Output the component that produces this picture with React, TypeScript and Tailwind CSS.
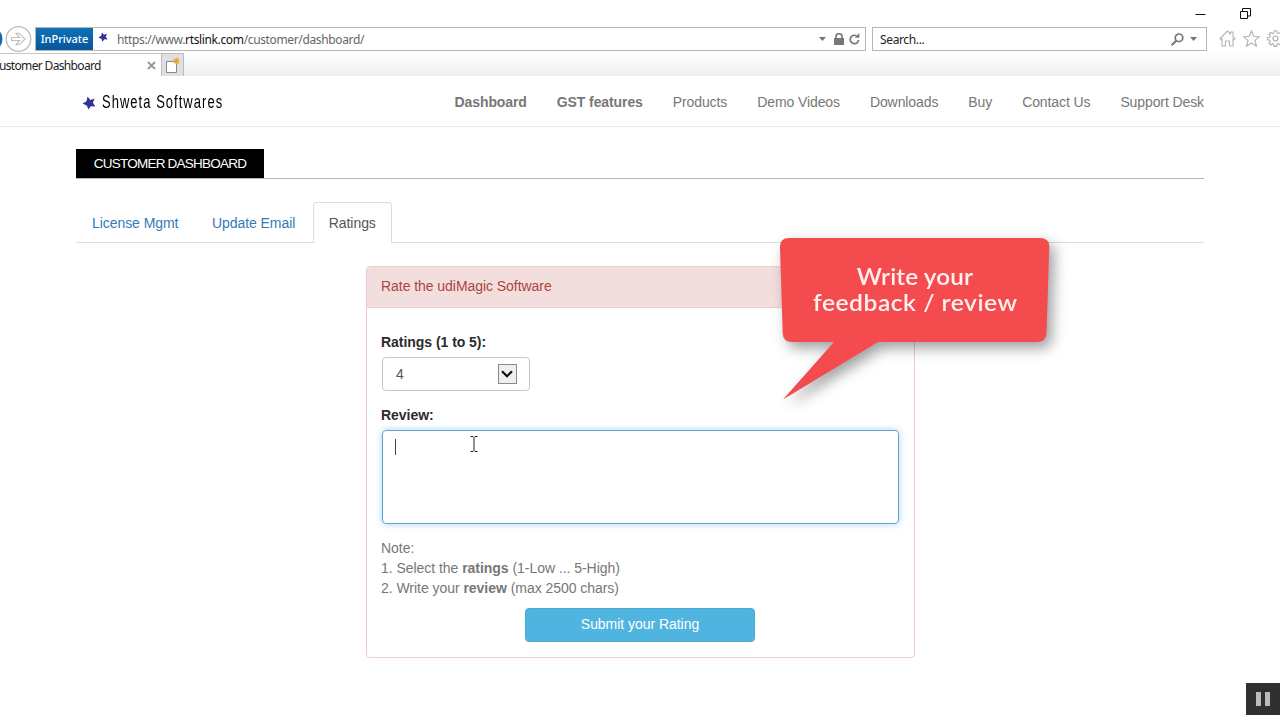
import { type ReactNode } from "react";

const NAV_LINKS = [
  { label: "Dashboard", bold: true },
  { label: "GST features", bold: true },
  { label: "Products" },
  { label: "Demo Videos" },
  { label: "Downloads" },
  { label: "Buy" },
  { label: "Contact Us" },
  { label: "Support Desk" },
];

function Caret() {
  return (
    <svg width="7" height="4" viewBox="0 0 7 4" fill="#777">
      <path d="M0 0h7L3.5 4z" />
    </svg>
  );
}

function BrandStar({ size }: { size: number }) {
  return (
    <svg width={size} height={size} viewBox="0 0 14 14" fill="#33339a" className="shrink-0">
      <path d="M5.6 0.6 8.3 3.9 12.6 2.6 10.9 6.8 13.4 10.5 8.9 10.3 6.3 13.6 5 9.7 0.6 7.6 4.5 5.2z" />
    </svg>
  );
}

function WindowControls() {
  return (
    <div className="flex h-[27px] items-center justify-end pr-[29px]">
      <svg width="11" height="11" viewBox="0 0 11 11" stroke="#111" fill="none">
        <path d="M0.5 6.5h10" />
      </svg>
      <svg width="11" height="11" viewBox="0 0 11 11" stroke="#111" fill="none" className="ml-[34px]">
        <path d="M0.5 3.5h7v7h-7zM2.500 3V0.500h8V8H8" />
      </svg>
    </div>
  );
}

function AddressBar() {
  return (
    <div className="flex h-6 items-center">
      <svg width="3" height="24" viewBox="0 0 3 24" className="shrink-0">
        <circle cx="-10" cy="12" r="12.500" fill="#0f6db5" />
      </svg>
      <svg width="27" height="27" viewBox="0 0 27 27" fill="none" stroke="#bdbdbd" className="ml-[2px] mr-[2px] shrink-0">
        <circle cx="13.500" cy="13" r="12.300" strokeWidth="1.300" />
        <path d="M6.500 11.500h8L11 7.200h3l6 5.800-6 5.800h-3l3.500-4.300h-8z" strokeWidth="1.100" />
      </svg>
      <div className="ml-[1px] flex h-6 w-[831px] shrink-0 items-center border border-[#b5b5b5] bg-white">
        <div className="flex h-[22px] w-[57px] items-center justify-center bg-linear-to-b from-[#0d72b8] to-[#08569b] text-[11px] font-medium text-white">
          InPrivate
        </div>
        <span className="-mt-1 ml-[5px]">
          <BrandStar size={10} />
        </span>
        <span className="ml-[9px] mt-px text-[12px] leading-5 tracking-[-0.36px] text-[#666]">
          https://www.<span className="text-[#111]">rtslink.com</span>/customer/dashboard/
        </span>
        <span className="ml-auto flex items-center pr-[5px]">
          <Caret />
          <svg width="10" height="12" viewBox="0 0 10 12" className="ml-[8px]">
            <path d="M0 5h10v7H0z" fill="#777" />
            <path d="M2 5.500V3.500a3 2.800 0 0 1 6 0v2" fill="none" stroke="#777" strokeWidth="1.600" />
          </svg>
          <svg width="11" height="12" viewBox="0 0 11 12" fill="none" stroke="#777" strokeWidth="1.700" className="ml-[5px]">
            <path d="M7.500 2.800A4.200 4.200 0 1 0 9.600 7" />
            <path d="M5.600 4.700h4.800V0z" fill="#777" stroke="none" />
          </svg>
        </span>
      </div>
      <div className="ml-[6px] flex h-6 w-[335px] shrink-0 items-center border border-[#b5b5b5] bg-white pl-[7px] pr-[9px]">
        <span className="mt-px text-[12px] leading-5 tracking-[-0.36px] text-[#222]">Search...</span>
        <svg width="13" height="13" viewBox="0 0 13 13" fill="none" stroke="#777" strokeWidth="1.700" className="ml-auto mr-[6px]">
          <circle cx="8" cy="4.800" r="3.800" />
          <path d="M5.300 7.500 0.700 12.200" strokeWidth="2" />
        </svg>
        <Caret />
      </div>
      <svg width="17" height="17" viewBox="0 0 17 17" fill="none" stroke="#b4b4b4" className="-mt-[2px] ml-[12px] shrink-0">
        <path d="M1 8.500 8.500 1l3 3V2h2.500v4.500l2 2-1 1.200-1-.8V16h-3.500v-5H6.500v5H3V8.900l-1 .8z" strokeWidth="1.100" />
      </svg>
      <svg width="17" height="17" viewBox="0 0 17 17" fill="none" stroke="#b4b4b4" className="-mt-[2px] ml-[7px] shrink-0">
        <path d="M8.500 1l2.200 5.300 5.700.4-4.400 3.700 1.400 5.600-4.900-3-4.900 3L5 10.400.6 6.700l5.700-.4z" strokeWidth="1.200" />
      </svg>
      <svg width="17" height="17" viewBox="0 0 17 17" fill="none" stroke="#b0b0b0" className="-mt-[2px] ml-[7px] shrink-0">
        <circle cx="8.500" cy="8.500" r="2.500" strokeWidth="1.200" />
        <path
          d="M7.200.8h2.600l.3 2.200 1.300.6L13.200 2.300 15 4.200l-1.300 1.700.5 1.300 2.200.3v2.300l-2.200.4-.5 1.200 1.300 1.800-1.800 1.800-1.800-1.300-1.300.5-.3 2.200H7.200l-.4-2.200-1.200-.5-1.800 1.300L2 13.200l1.300-1.800-.5-1.200-2.200-.4V7.500l2.200-.3.5-1.300L2 4.200l1.800-1.900 1.800 1.300L6.800 3z"
          strokeWidth="1.100"
        />
      </svg>
    </div>
  );
}

function BrowserTabs() {
  return (
    <div className="flex h-[25px] items-end bg-linear-to-b from-white to-[#efefef]">
      <div className="flex h-[23px] w-[161px] items-center justify-between border-t border-[#c8c8c8] bg-white pr-[5px] text-[12px] text-[#222]">
        <span className="-ml-[8px] mt-[2px] whitespace-nowrap tracking-[-0.65px]">Customer Dashboard</span>
        <svg width="9" height="9" viewBox="0 0 9 9" stroke="#999" strokeWidth="1.800">
          <path d="M1 1l7 7M8 1 1 8" />
        </svg>
      </div>
      <div className="flex h-[23px] w-[23px] items-center justify-center border border-b-0 border-[#bcbcbc] bg-[#e0e0e0]">
        <svg width="15" height="17" viewBox="0 0 15 17">
          <path d="M1.500 4.500h10v11h-10z" fill="#fff" stroke="#888" />
          <path d="M11.500 0.800v6.400M8.300 4h6.400M9.200 1.700l4.600 4.600M13.800 1.700 9.200 6.300" stroke="#eba42c" strokeWidth="1.200" />
        </svg>
      </div>
    </div>
  );
}

function SiteHeader() {
  return (
    <header className="flex h-[51px] items-center justify-between border-b border-[#e9e9e9] pl-[82px] pr-[76px] pt-px">
      <div className="flex items-center pt-[2px]">
        <BrandStar size={14} />
        <span className="ml-[6px] w-[122px] whitespace-nowrap">
          <span className="inline-block origin-left scale-x-[0.72] text-[18px] leading-6 tracking-[1.45px] text-black">
            Shweta Softwares
          </span>
        </span>
      </div>
      <nav className="flex gap-[30px] text-[14px] leading-5 tracking-[-0.1px] text-[#777]">
        {NAV_LINKS.map((link) => (
          <a key={link.label} className={link.bold ? "font-bold" : ""}>
            {link.label}
          </a>
        ))}
      </nav>
    </header>
  );
}

function FieldLabel({ children }: { children: ReactNode }) {
  return <label className="block text-[14px] leading-5 font-bold text-[#2b2b2b]">{children}</label>;
}

function RatingPanel() {
  return (
    <section className="mx-auto mt-[23px] h-[392px] w-[549px] rounded border border-[#ebccd1]">
      <div className="h-[41px] rounded-t-[3px] border-b border-[#ebccd1] bg-[#f2dfdd] px-[14.5px] py-[9px] text-[14px] leading-5 tracking-[-0.05px] text-[#ad4340]">
        Rate the udiMagic Software
      </div>
      <div className="px-[15px] pt-[24px] tracking-[-0.04px]">
        <div className="-ml-[0.5px]">
          <FieldLabel>Ratings (1 to 5):</FieldLabel>
        </div>
        <div className="mt-[5px] flex h-[34px] w-[148px] items-center justify-between rounded border border-[#c6c6c6] pl-[13.5px] pr-[12px] text-[14px] text-[#555]">
          4
          <span className="flex h-5 w-[19px] items-center justify-center border border-[#8a8a8a] bg-[#efefef]">
            <svg width="12" height="8" viewBox="0 0 12 8" fill="none" stroke="#111" strokeWidth="2.200">
              <path d="M1 1.200 6 6.200l5-5" />
            </svg>
          </span>
        </div>
        <div className="-ml-[0.5px] mt-[14px]">
          <FieldLabel>Review:</FieldLabel>
        </div>
        <div className="mt-[5px] flex h-[94px] w-[517px] rounded border border-[#5ea6d2] pl-[12px] pt-[8px] shadow-[0_0_7px_rgba(102,175,233,0.55)]">
          <span className="h-4 w-px bg-[#444]" />
          <svg width="8" height="16" viewBox="0 0 8 16" fill="none" stroke="#222" className="-mt-[3px] ml-[74px]">
            <path d="M0.500 0.500h2.500l1 1 1-1h2.500M4 1.500v13M0.500 15.500h2.500l1-1 1 1h2.500" />
          </svg>
        </div>
        <div className="-ml-[0.5px] mt-[14px] text-[14px] leading-5 text-[#777]">
          <p>Note:</p>
          <p>
            1. Select the <b>ratings</b> (1-Low ... 5-High)
          </p>
          <p>
            2. Write your <b>review</b> (max 2500 chars)
          </p>
        </div>
        <button className="mx-auto mt-[10px] block h-[34px] w-[230px] rounded border border-[#46abd5] bg-[#50b4e0] pb-[2px] text-[14px] text-white">
          Submit your Rating
        </button>
      </div>
    </section>
  );
}

function Callout() {
  return (
    <div className="absolute left-[779px] top-[237px] h-[164px] w-[272px]">
      <svg
        width="272"
        height="164"
        viewBox="0 0 272 164"
        className="absolute inset-0 overflow-visible drop-shadow-[5px_6px_7px_rgba(0,0,0,0.38)]"
      >
        <path
          d="M10 1H261Q270.500 1 270.300 10L267.500 96Q267 105 258 105H99L4 162.500 55 105H13Q4 105 3.700 96L1 11Q0.500 1 10 1Z"
          fill="#f44b4f"
        />
      </svg>
      <div className="relative flex h-[104px] flex-col items-center justify-center pt-px font-['Lato'] text-[22px] leading-[26px] font-semibold text-[#fff1ef]">
        <span className="scale-x-[1.1] tracking-[0.15px]">Write your</span>
        <span className="scale-x-[1.12] tracking-[0.45px]">feedback / review</span>
      </div>
    </div>
  );
}

export default function App() {
  return (
    <div className="relative h-[720px] w-[1280px] overflow-hidden bg-white font-['Liberation_Sans',Arial,sans-serif]">
      <div className="font-['Noto_Sans','Open_Sans',sans-serif]">
        <WindowControls />
        <AddressBar />
        <BrowserTabs />
      </div>
      <SiteHeader />
      <main className="px-[76px] pt-[22px]">
        <div className="flex border-b border-[#b5b5b5]">
          <h1 className="h-[29px] w-[188px] bg-black text-center text-[13.5px] leading-[29px] tracking-[-0.76px] text-white">
            CUSTOMER DASHBOARD
          </h1>
        </div>
        <div className="mt-[23px] flex h-[41px] border-b border-[#ddd] text-[14px] leading-5 tracking-[-0.06px] text-[#337ab7]">
          <a className="py-[10.5px] pl-4 pr-[17.5px]">License Mgmt</a>
          <a className="py-[10.5px] pl-4 pr-[17.5px]">Update Email</a>
          <a className="h-[41px] rounded-t border border-b-0 border-[#ddd] bg-white px-[15px] py-[9.5px] text-[#555]">
            Ratings
          </a>
        </div>
        <RatingPanel />
      </main>
      <Callout />
      <div className="absolute left-[1246px] top-[683px] flex h-8 w-[34px] items-center justify-center gap-1 bg-[#303030]">
        <span className="h-[14px] w-[5px] bg-[#bbb]" />
        <span className="h-[14px] w-[5px] bg-[#bbb]" />
      </div>
    </div>
  );
}
